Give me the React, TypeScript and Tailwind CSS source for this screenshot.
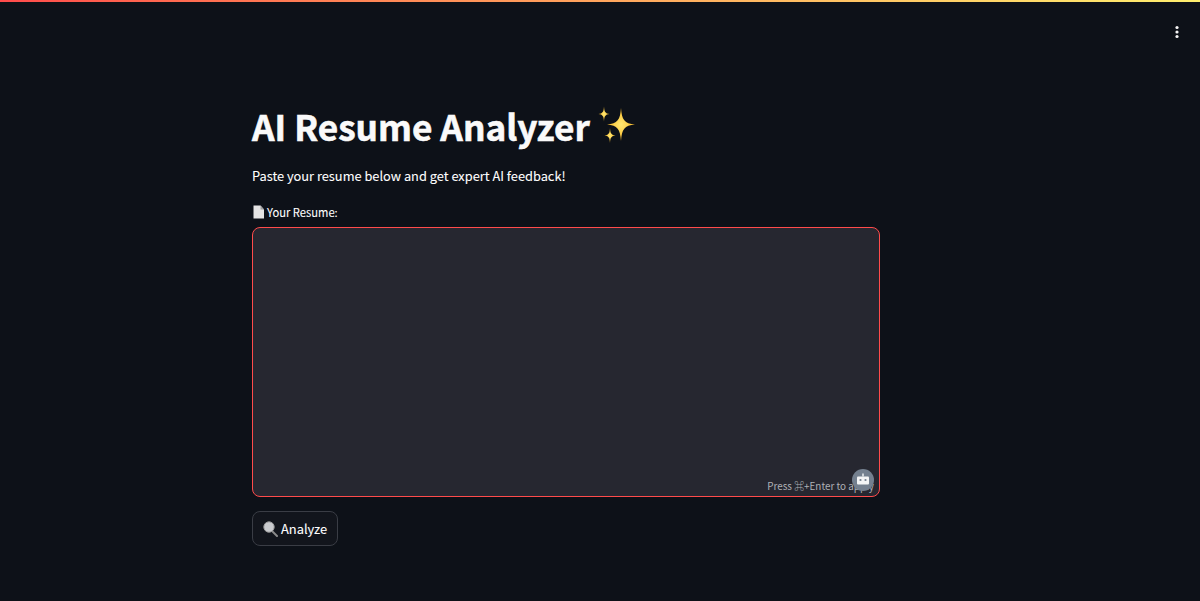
import React from "react";

function Sparkles() {
  const star = "M50 0 C53 36 62 47 100 50 C62 53 53 64 50 100 C47 64 38 53 0 50 C38 47 47 36 50 0Z";
  return (
    <svg width="40" height="40" viewBox="0 0 40 40" className="shrink-0">
      <defs>
        <radialGradient id="sg">
          <stop offset="0" stopColor="#ffe873" />
          <stop offset="1" stopColor="#fcb924" />
        </radialGradient>
      </defs>
      <path d={star} fill="url(#sg)" transform="translate(9 2) scale(0.28 0.33)" />
      <path d={star} fill="url(#sg)" transform="translate(0.5 0.5) scale(0.11 0.15)" />
      <path d={star} fill="url(#sg)" transform="translate(6.5 22) scale(0.11 0.15)" />
    </svg>
  );
}

function DocIcon() {
  return (
    <svg width="13" height="14" viewBox="0 0 13 14" className="shrink-0">
      <path d="M1.5 0.5h7L12 4.5V13.5H1.5z" fill="#e4e4e4" />
      <path d="M8.5 0.5v4H12z" fill="#a0a0a0" />
    </svg>
  );
}

function Magnifier() {
  return (
    <svg width="15" height="16" viewBox="0 0 15 16" className="shrink-0">
      <path d="M9 10l5 5" stroke="#8a8a8a" strokeWidth="2" strokeLinecap="round" />
      <circle cx="6" cy="6" r="5.2" fill="#c9cbce" stroke="#9a9a9a" strokeWidth="1" />
    </svg>
  );
}

function BotBadge() {
  return (
    <div className="absolute right-[5px] bottom-[5px] flex h-[22px] w-[22px] items-center justify-center rounded-full bg-[#74808f]">
      <svg width="14" height="14" viewBox="0 0 14 14">
        <path d="M7 0.5v3" stroke="#f4f5f6" strokeWidth="1.4" />
        <rect x="1" y="3.5" width="12" height="8" rx="1" fill="#f4f5f6" />
        <circle cx="4.5" cy="7" r="1.1" fill="#74808f" />
        <circle cx="9.5" cy="7" r="1.1" fill="#74808f" />
      </svg>
    </div>
  );
}

export default function App() {
  return (
    <div
      className="flex h-[601px] w-full flex-col overflow-hidden bg-[#0d1118] text-[#fafafa]"
      style={{ fontFamily: '"Noto Sans CJK SC", "Noto Sans", sans-serif' }}
    >
      <div className="h-[2px] w-full shrink-0 bg-gradient-to-r from-[#ff4b4b] to-[#ffef6e]" />
      <div className="flex justify-end pt-[23px] pr-[19px]">
        <svg width="8" height="14" viewBox="0 0 8 14" className="block">
          <circle cx="4" cy="2.5" r="1.6" fill="#f5f5f5" />
          <circle cx="4" cy="7" r="1.6" fill="#f5f5f5" />
          <circle cx="4" cy="11.5" r="1.6" fill="#f5f5f5" />
        </svg>
      </div>
      <main className="ml-[252px] w-[628px] pt-[64px]">
        <div className="flex h-[46px] items-center gap-[8px]">
          <h1 className="text-[35.2px] leading-[46px] font-bold whitespace-nowrap [-webkit-text-stroke:0.6px_#fafafa]">AI Resume Analyzer</h1>
          <Sparkles />
        </div>
        <p className="mt-[15px] text-[12.8px] leading-[24px] text-white [-webkit-text-stroke:0.08px_#fff]">Paste your resume below and get expert AI feedback!</p>
        <div className="mt-[15px] flex h-[18px] items-center gap-[2px] text-[11.2px] leading-[18px] text-white [-webkit-text-stroke:0.08px_#fff]">
          <DocIcon />
          <span>Your Resume:</span>
        </div>
        <div className="relative mt-[6px] h-[270px] w-full rounded-[8px] border border-[#ff4b4b] bg-[#262730]">
          <div className="absolute right-[5px] bottom-[3px] text-[9.9px] leading-[14px] whitespace-nowrap text-[#afb1b6]">
            Press ⌘+Enter to apply
          </div>
          <BotBadge />
        </div>
        <button className="mt-[14px] flex h-[35px] w-[86px] items-center justify-center gap-[3px] rounded-[8px] border border-[#3a3d45] bg-[#12151c] text-[12.9px] text-white [-webkit-text-stroke:0.08px_#fff]">
          <Magnifier />
          <span>Analyze</span>
        </button>
      </main>
    </div>
  );
}
